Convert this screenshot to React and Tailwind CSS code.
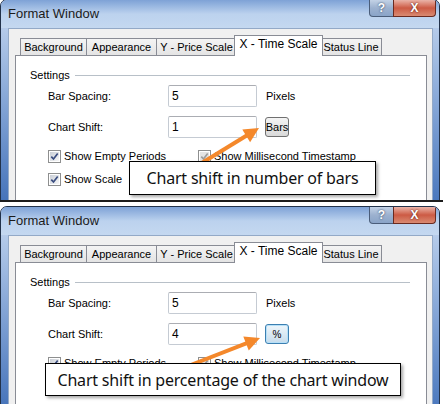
import React from "react";

const UI = "font-['Liberation_Sans',Arial,sans-serif]";

function Checkbox({ disabled }) {
  return (
    <span className="w-[13px] h-[13px] border border-[#8e8f8f] bg-white p-px flex shrink-0">
      <span
        className={
          disabled
            ? "flex-1 flex items-center justify-center bg-[#e4e4e4]"
            : "flex-1 flex items-center justify-center bg-gradient-to-br from-[#c9ced6] to-[#f7f7f7]"
        }
      >
        <svg width="9" height="9" viewBox="0 0 9 9">
          <path
            d="M1.3 4.6 L3.5 7 L7.7 1.4"
            fill="none"
            stroke={disabled ? "#9c9c9c" : "#3a4d80"}
            strokeWidth="1.7"
          />
        </svg>
      </span>
    </span>
  );
}

function Arrow({ x1, y1, x2, y2 }) {
  const dx = x2 - x1;
  const dy = y2 - y1;
  const L = Math.hypot(dx, dy);
  const ux = dx / L;
  const uy = dy / L;
  const hl = 15;
  const hw = 7.5;
  const bx = x2 - ux * hl;
  const by = y2 - uy * hl;
  const pts = `${x2},${y2} ${bx - uy * hw},${by + ux * hw} ${bx + uy * hw},${by - ux * hw}`;
  return (
    <svg className="absolute left-0 top-0 pointer-events-none" width="440" height="220">
      <line x1={x1} y1={y1} x2={bx + ux * 3} y2={by + uy * 3} stroke="#f4882b" strokeWidth="4" />
      <polygon points={pts} fill="#f4882b" />
    </svg>
  );
}

const tabs = [
  { label: "Background", cls: "w-[67px]" },
  { label: "Appearance", cls: "w-[71px] -ml-px" },
  { label: "Y - Price Scale", cls: "w-[81px] -ml-px" },
  { label: "X - Time Scale", cls: "w-[89px] -ml-[3px]", sel: true },
  { label: "Status Line", cls: "w-[62px] -ml-[3px]" },
];

function Win({ shift, btn, focused, callout, first }) {
  return (
    <div className={`relative w-[440px] ${UI}`}>
      <div className="rounded-t-[7px] border border-[#22324a] overflow-hidden bg-[#b9cfec]">
        {/* title bar */}
        <div className="h-[28px] flex items-start bg-gradient-to-b from-[#7ea2d6] via-[#bcd2ee] to-[#c4d8f0]">
          <div className="h-[28px] flex items-center pl-[7px] text-[13px] text-[#1b1b1b] flex-1">
            Format Window
          </div>
          <div className="flex mr-[3px]">
            <div className="w-[25px] h-[17px] rounded-bl-[4px] border border-t-0 border-[#4a5d7a] bg-gradient-to-b from-[#c3d2e6] via-[#9cb1cf] to-[#8aa4c8] flex items-center justify-center text-white font-bold text-[12px] [text-shadow:0_0_2px_#1e2e48]">
              ?
            </div>
            <div className="w-[43px] h-[17px] -ml-px rounded-br-[4px] border border-t-0 border-[#6a2a20] bg-gradient-to-b from-[#e9b3a8] via-[#cc5a44] to-[#d98a72] flex items-center justify-center text-white font-bold text-[12px] [text-shadow:0_0_2px_#4a1008]">
              X
            </div>
          </div>
        </div>
        {/* body */}
        <div className="flex">
          <div className="w-[7px] bg-gradient-to-b from-[#b5cbea] to-[#3566b2]" />
          <div className="flex-1 bg-[#f0f0f0] border border-[#93a9c7] pl-[6px] pr-[5px] pt-[6px] h-[200px]">
            {/* tabs */}
            <div className="flex items-end h-[20px] pl-[5px] text-[11px] text-black whitespace-nowrap">
              {tabs.map((t) =>
                t.sel ? (
                  <div
                    key={t.label}
                    className={`${t.cls} relative z-10 h-[21px] -mb-px bg-white border border-b-0 border-[#898c95] flex items-center justify-center pb-[4px] text-[12px]`}
                  >
                    {t.label}
                  </div>
                ) : (
                  <div
                    key={t.label}
                    className={`${t.cls} h-[17px] border border-b-0 border-[#898c95] bg-gradient-to-b from-[#f4f4f4] to-[#e4e4e4] flex items-center justify-center pt-px`}
                  >
                    {t.label}
                  </div>
                )
              )}
            </div>
            {/* panel */}
            <div className="bg-white border border-[#898c95] h-[200px] pt-[12px] text-[11px] text-black whitespace-nowrap">
              <div className="flex items-center h-[14px] pl-[14px]">
                <span className="w-[45px]">Settings</span>
                <div className="flex-1 h-px bg-[#b8c0c8] mr-[16px]" />
              </div>
              <div className="flex items-center h-[22px] mt-[3px] pl-[32px]">
                <span className="w-[120px]">Bar Spacing:</span>
                <div className="w-[89px] h-[22px] rounded-[2px] border border-[#c5cbd3] border-t-[#abadb3] bg-white flex items-center pl-[3px] text-[12px]">
                  5
                </div>
                <span className="ml-[9px]">Pixels</span>
              </div>
              <div className="flex items-center h-[22px] mt-[9px] pl-[32px]">
                <span className="w-[120px]">Chart Shift:</span>
                <div className="w-[89px] h-[22px] rounded-[2px] border border-[#c5cbd3] border-t-[#abadb3] bg-white flex items-center pl-[3px] text-[12px]">
                  {shift}
                </div>
                {focused ? (
                  <div className="ml-[8px] w-[24px] h-[20px] rounded-[3px] border border-[#3c7fb1] bg-gradient-to-b from-[#eef6fb] to-[#c7dcec] shadow-[inset_0_0_0_1px_#b6e0f8] flex items-center justify-center text-[10px]">
                    {btn}
                  </div>
                ) : (
                  <div className="ml-[8px] w-[24px] h-[20px] rounded-[3px] border border-[#707070] bg-gradient-to-b from-[#f4f4f4] to-[#d9d9d9] flex items-center justify-center">
                    {btn}
                  </div>
                )}
              </div>
              <div className="flex items-center h-[14px] mt-[11px] pl-[32px]">
                <div className="w-[150px] flex items-center gap-[3px]">
                  <Checkbox />
                  <span>Show Empty Periods</span>
                </div>
                <div className="flex items-center gap-[3px]">
                  <Checkbox disabled />
                  <span>Show Millisecond Timestamp</span>
                </div>
              </div>
              <div className="flex items-center h-[14px] mt-[9px] pl-[32px]">
                <div className="flex items-center gap-[3px]">
                  <Checkbox />
                  <span>Show Scale</span>
                </div>
              </div>
            </div>
          </div>
          <div className="w-[6px] bg-gradient-to-b from-[#b5cbea] to-[#3a6bb6]" />
        </div>
      </div>

      {first ? (
        <>
          <Arrow x1={192} y1={170} x2={259} y2={129} />
          <div className="absolute left-[129px] top-[162px] w-[247px] h-[34px] bg-white border border-black shadow-[2px_2px_3px_rgba(0,0,0,0.35)] flex items-center justify-center font-['Noto_Sans',sans-serif] text-[16px] tracking-[-0.2px] text-[#111] whitespace-nowrap">
            {callout}
          </div>
        </>
      ) : (
        <>
          <Arrow x1={178} y1={164} x2={260} y2={132} />
          <div className="absolute left-[45px] top-[157px] w-[356px] h-[33px] bg-white border border-black shadow-[2px_2px_3px_rgba(0,0,0,0.35)] flex items-center justify-center font-['Noto_Sans',sans-serif] text-[16px] tracking-[-0.2px] text-[#111] whitespace-nowrap">
            {callout}
          </div>
        </>
      )}
    </div>
  );
}

export default function App() {
  return (
    <div className="w-[443px] h-[404px] overflow-hidden bg-white">
      <div className="h-[200px] overflow-hidden">
        <div className="-mt-px">
          <Win first shift="1" btn="Bars" callout="Chart shift in number of bars" />
        </div>
      </div>
      <div className="h-[2px] bg-[#1c1c1c]" />
      <div className="h-[4px]" />
      <Win shift="4" btn="%" focused callout="Chart shift in percentage of the chart window" />
    </div>
  );
}
